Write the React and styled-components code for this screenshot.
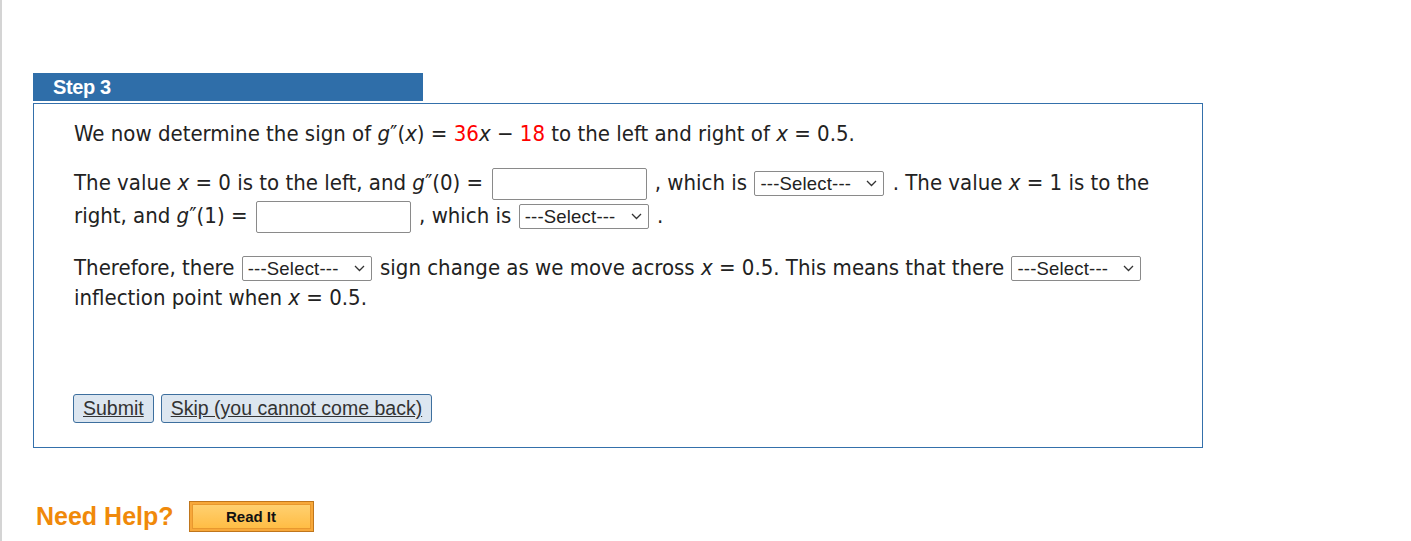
import styled, { createGlobalStyle } from "styled-components";

const GlobalStyle = createGlobalStyle`
    html, body {
        margin: 0;
        padding: 0;
        background: #ffffff;
    }
`

const Page = styled.div`
    min-height: 541px;
    box-sizing: border-box;
    border-left: 2px solid #d4d4d4;
    padding: 73px 0 0 31px;
    font-family: "DejaVu Sans Condensed", "DejaVu Sans", sans-serif;
    color: #222;
`

const StepHeader = styled.div`
    width: 390px;
    height: 28px;
    box-sizing: border-box;
    background: #2f6ea9;
    color: #fff;
    font-family: "Liberation Sans", Arial, sans-serif;
    font-weight: bold;
    font-size: 20px;
    line-height: 28px;
    padding-left: 20px;
    letter-spacing: -0.4px;
`

const StepBox = styled.div`
    margin-top: 2px;
    width: 1170px;
    height: 345px;
    box-sizing: border-box;
    border: 1px solid #3470ab;
    padding: 18px 40px 0 40px;
`

const Para = styled.p`
    margin: 0 0 ${p => p.$gap || 0}px 0;
    font-size: 22px;
    line-height: ${p => p.$lh || 24}px;
`

const Red = styled.span`
    color: #ff0000;
`

const Input = styled.input`
    width: 155px;
    height: 32px;
    box-sizing: border-box;
    border: 1px solid #8a8a8a;
    border-radius: 2px;
    vertical-align: middle;
    margin: 0 2px;
    padding: 0;
    background: #fff;
`

const SelectWrap = styled.span`
    position: relative;
    display: inline-block;
    vertical-align: middle;
    margin: -1px 2px 0 1px;
    line-height: 0;
`

const Select = styled.select`
    appearance: none;
    width: 130px;
    height: 25px;
    box-sizing: border-box;
    border: 1px solid #8a8a8a;
    border-radius: 2px;
    background: #fff;
    color: #222;
    font-family: "Liberation Sans", Arial, sans-serif;
    font-size: 18.5px;
    letter-spacing: 0.2px;
    padding: 0 0 0 5px;
    margin: 0;
`

const Chevron = styled.svg`
    position: absolute;
    right: 7px;
    top: 9px;
    pointer-events: none;
`

const Buttons = styled.div`
    display: flex;
    gap: 7px;
    margin-top: 81px;
    margin-left: -1px;
`

const ActionButton = styled.button`
    height: 29px;
    box-sizing: border-box;
    background: #dce6f0;
    border: 1px solid #3d6f9e;
    border-radius: 3px;
    color: #333;
    font-family: "Liberation Sans", Arial, sans-serif;
    font-size: 19.5px;
    text-decoration: underline;
    padding: 0 9px;
    cursor: pointer;
`

const HelpRow = styled.div`
    display: flex;
    align-items: center;
    gap: 15px;
    margin-top: 53px;
    margin-left: 3px;
`

const HelpLabel = styled.span`
    color: #f0890a;
    font-family: "Liberation Sans", Arial, sans-serif;
    font-weight: bold;
    font-size: 25px;
`

const ReadIt = styled.button`
    width: 125px;
    height: 31px;
    box-sizing: border-box;
    border: 1px solid #c0761c;
    background: #f7a83a;
    padding: 2px;
    cursor: pointer;
    display: flex;
`

const ReadItInner = styled.span`
    flex: 1;
    display: flex;
    align-items: center;
    justify-content: center;
    border: 1px solid #e8982e;
    background: linear-gradient(#ffd070, #ffbd45);
    color: #111;
    font-family: "Liberation Sans", Arial, sans-serif;
    font-weight: bold;
    font-size: 15px;
`

function Dropdown() {
    return (
        <SelectWrap>
            <Select defaultValue="">
                <option value="">---Select---</option>
                <option>is</option>
                <option>is not</option>
            </Select>
            <Chevron width="11" height="7" viewBox="0 0 11 7">
                <path d="M1 1l4.5 4.5L10 1" fill="none" stroke="#333" strokeWidth="1.3" />
            </Chevron>
        </SelectWrap>
    )
}

function App() {
    return (
        <Page>
            <GlobalStyle />
            <StepHeader>Step 3</StepHeader>
            <StepBox>
                <Para $gap={21}>
                    We now determine the sign of <i>g</i>″(<i>x</i>) = <Red>36</Red><i>x</i> − <Red>18</Red> to the left and right of <i>x</i> = 0.5.
                </Para>
                <Para $lh={32} $gap={20}>
                    The value <i>x</i> = 0 is to the left, and <i>g</i>″(0) = <Input type="text" /> , which is <Dropdown /> . The value <i>x</i> = 1 is to the right, and <i>g</i>″(1) = <Input type="text" /> , which is <Dropdown /> .
                </Para>
                <Para $lh={30}>
                    Therefore, there <Dropdown /> sign change as we move across <i>x</i> = 0.5. This means that there <Dropdown /> inflection point when <i>x</i> = 0.5.
                </Para>
                <Buttons>
                    <ActionButton>Submit</ActionButton>
                    <ActionButton>Skip (you cannot come back)</ActionButton>
                </Buttons>
            </StepBox>
            <HelpRow>
                <HelpLabel>Need Help?</HelpLabel>
                <ReadIt><ReadItInner>Read It</ReadItInner></ReadIt>
            </HelpRow>
        </Page>
    )
}

export default App;
